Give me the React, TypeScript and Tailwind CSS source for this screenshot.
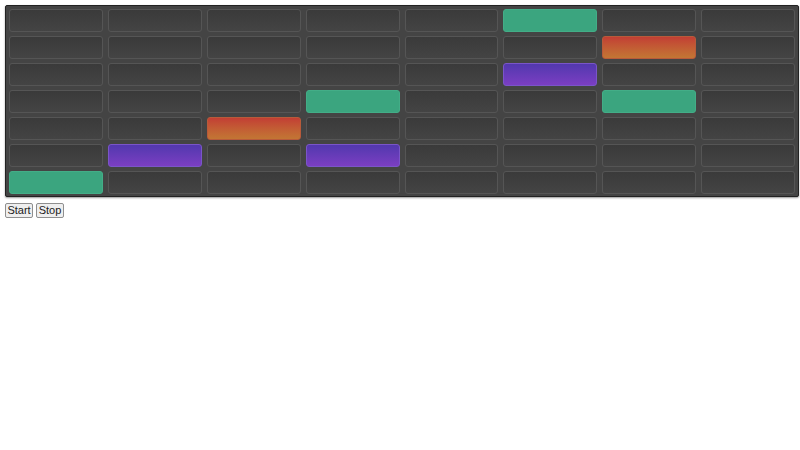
import React from "react";

const active: Record<string, "green" | "orange" | "purple"> = {
  "0-5": "green",
  "1-6": "orange",
  "2-5": "purple",
  "3-3": "green",
  "3-6": "green",
  "4-2": "orange",
  "5-1": "purple",
  "5-3": "purple",
  "6-0": "green",
};

function Cell({ kind }: { kind?: "green" | "orange" | "purple" }) {
  if (kind === "green")
    return <div className="h-[23px] rounded-[3px] bg-[#3ba57f] border border-[#43ad87]" />;
  if (kind === "orange")
    return (
      <div className="h-[23px] rounded-[3px] border border-[#b85a3a] bg-gradient-to-b from-[#c23e34] to-[#c27634]" />
    );
  if (kind === "purple")
    return (
      <div className="h-[23px] rounded-[3px] border border-[#7a55c8] bg-gradient-to-b from-[#5238ae] to-[#7b3ec2]" />
    );
  return (
    <div className="h-[23px] rounded-[3px] border border-[#555555] bg-gradient-to-b from-[#3a3a3a] to-[#444444]" />
  );
}

export default function App() {
  const rows = Array.from({ length: 7 });
  const cols = Array.from({ length: 8 });
  return (
    <div className="bg-white w-[800px] h-[450px]" style={{ fontFamily: '"Liberation Sans", Arial, sans-serif' }}>
      <div className="ml-[5px] pt-[5px]">
        <div className="w-[794px] border border-[#222222] bg-[#444444] rounded-[2px] pt-[3px] px-[3px] pb-[2px] grid grid-cols-8 gap-x-[5px] gap-y-[4px] shadow-[0_1px_2px_rgba(0,0,0,0.4)]">
          {rows.map((_, r) =>
            cols.map((_, c) => <Cell key={`${r}-${c}`} kind={active[`${r}-${c}`]} />)
          )}
        </div>
        <div className="mt-[6px] flex gap-[3px]">
          <button className="h-[15px] w-[28px] px-0 text-[11px] leading-[13px] text-[#222222] bg-[#efefef] border border-[#8f8f8f] rounded-[2px]">
            Start
          </button>
          <button className="h-[15px] w-[28px] px-0 text-[11px] leading-[13px] text-[#222222] bg-[#efefef] border border-[#8f8f8f] rounded-[2px]">
            Stop
          </button>
        </div>
      </div>
    </div>
  );
}
